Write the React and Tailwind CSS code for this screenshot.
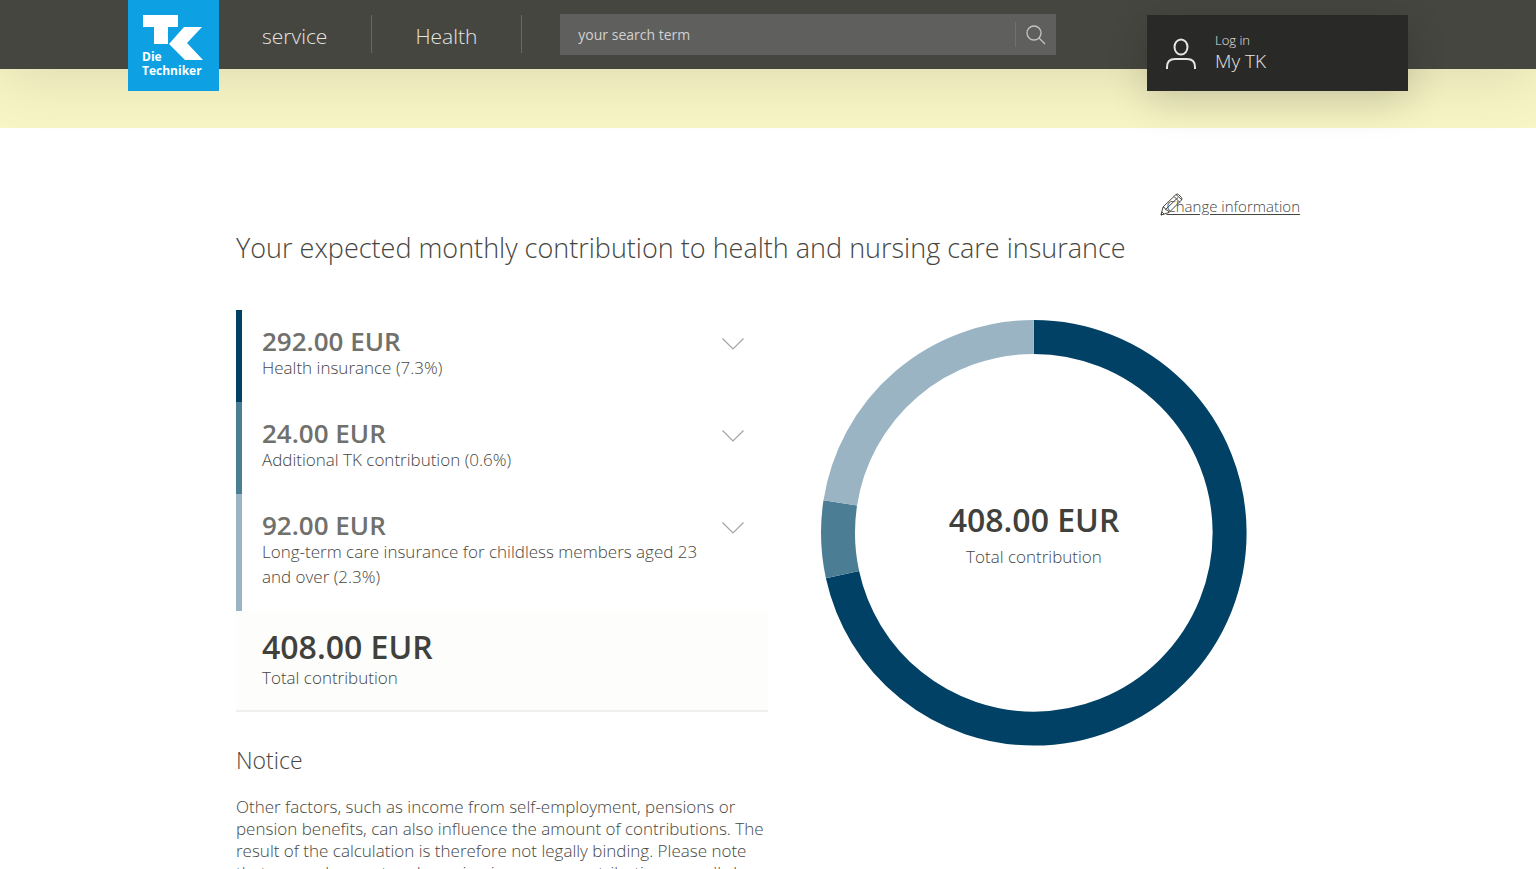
import { useState } from "react";

const contributions = [
  {
    id: "health",
    amount: 292,
    label: "Health insurance (7.3%)",
    border: "border-[#004165]",
    stroke: "#004165",
  },
  {
    id: "additional",
    amount: 24,
    label: "Additional TK contribution (0.6%)",
    border: "border-[#4b7d94]",
    stroke: "#4b7d94",
  },
  {
    id: "care",
    amount: 92,
    label: "Long-term care insurance for childless members aged 23 and over (2.3%)",
    border: "border-[#9ab4c3]",
    stroke: "#9ab4c3",
  },
];

const total = contributions.reduce((sum, item) => sum + item.amount, 0);

const formatAmount = (value) => `${value.toFixed(2)} EUR`;

const Logo = () => (
  <a
    href="#"
    className="flex h-[91px] w-[91px] shrink-0 flex-col bg-[#0da1e4] pl-[14px] pt-[14px] text-white"
  >
    <svg viewBox="0 0 62 47" className="h-[47px] w-[62px]" fill="currentColor" aria-hidden="true">
      <path d="M1 1h35v12H26v17H12V13H1z" />
      <path d="M42 13h18L45 29l16 17H43L27 30z" />
    </svg>
    <span className="-mt-[11px] text-xs font-bold leading-[14px]">
      Die
      <br />
      Techniker
    </span>
  </a>
);

const Header = () => (
  <header className="relative z-10 h-[69px] bg-[#464641] shadow-[0_10px_60px_rgba(0,0,0,0.1)]">
    <div className="mx-auto flex max-w-[1280px] items-start">
      <Logo />
      <nav className="mt-[15px] flex h-[38px] text-[21px] font-light text-[#e4e4e0]">
        <a href="#" className="flex items-center border-r border-[#686864] pl-[43px] pr-11 pt-[6px]">
          service
        </a>
        <a href="#" className="flex items-center border-r border-[#686864] pl-[43px] pr-11 pt-[6px]">
          Health
        </a>
      </nav>
      <form
        className="ml-[38px] mt-[14px] flex h-[41px] flex-1 items-center bg-[#5f5f5d]"
        onSubmit={(e) => e.preventDefault()}
      >
        <input
          type="search"
          aria-label="your search term"
          placeholder="your search term"
          className="h-full min-w-0 flex-1 bg-transparent px-[18px] text-sm text-white outline-none placeholder:text-[#d2d2d0]"
        />
        <button
          type="submit"
          aria-label="Search"
          className="flex h-[25px] w-[41px] items-center justify-center border-l border-[#70706e] text-[#c4c4c2]"
        >
          <svg viewBox="0 0 20 20" className="h-5 w-5" fill="none" stroke="currentColor" strokeWidth="1.3" aria-hidden="true">
            <circle cx="8" cy="8" r="7" />
            <path d="M13 13l6 6" />
          </svg>
        </button>
      </form>
      <a
        href="#"
        className="ml-[91px] mt-[15px] flex h-[76px] w-[261px] items-center bg-[#292927] pl-[18px] text-[#e4e4e0] shadow-[0_10px_40px_rgba(0,0,0,0.16)]"
      >
        <svg viewBox="0 0 32 32" className="h-8 w-8" fill="none" stroke="currentColor" strokeWidth="2" aria-hidden="true">
          <ellipse cx="16" cy="10" rx="6.5" ry="7.5" />
          <path d="M2 32v-2c0-5 3-8 8-8h12c5 0 8 3 8 8v2" />
        </svg>
        <span className="ml-[18px] pb-1 font-light">
          <span className="block text-[13px] leading-5">Log in</span>
          <span className="block text-[19px] leading-[22px]">My TK</span>
        </span>
      </a>
    </div>
  </header>
);

const ContributionRow = ({ item, open, onToggle }) => (
  <li className={`flex border-l-[6px] pb-[22px] pl-5 pr-6 pt-[18px] ${item.border}`}>
    <div className="flex-1 pr-3">
      <div className="text-[26px] font-semibold leading-[27px] text-[#70706c]">
        {formatAmount(item.amount)}
      </div>
      <div className="text-[17px] font-light leading-[25px]">{item.label}</div>
    </div>
    <button
      type="button"
      aria-label={`Details: ${item.label}`}
      aria-expanded={open}
      onClick={onToggle}
      className="flex h-8 w-[22px] items-center text-[#a3a3a0]"
    >
      <svg viewBox="0 0 22 12" className="h-3 w-[22px]" fill="none" stroke="currentColor" strokeWidth="1.2" aria-hidden="true">
        <path d="M0.5 0.5L11 11L21.5 0.5" />
      </svg>
    </button>
  </li>
);

const DonutChart = () => {
  let start = 0;
  const segments = contributions.map((item) => {
    const segment = { ...item, start };
    start += item.amount;
    return segment;
  });

  return (
    <div className="relative mx-auto mt-[10px] w-4/5 self-start">
      <svg viewBox="0 0 426 426" className="w-full" fill="none" aria-hidden="true">
        {segments.map((s) => (
          <circle
            key={s.id}
            cx="213"
            cy="213"
            r="196"
            pathLength={total}
            stroke={s.stroke}
            strokeWidth="34"
            strokeDasharray={`${s.amount} ${total - s.amount}`}
            strokeDashoffset={-s.start}
            transform="rotate(-90 213 213)"
          />
        ))}
      </svg>
      <div className="absolute inset-0 flex flex-col items-center justify-center pt-1 text-center">
        <div className="text-[32px] font-semibold leading-10 text-[#40403c]">{formatAmount(total)}</div>
        <div className="mt-1 text-[17px] font-light leading-[25px]">Total contribution</div>
      </div>
    </div>
  );
};

const App = () => {
  const [openId, setOpenId] = useState(null);

  return (
    <div className="bg-white font-['Open_Sans','Noto_Sans',sans-serif] text-[#464641]">
      <Header />
      <div className="h-[59px] bg-[#f7f4c5]" />

      <main className="mx-auto max-w-[1280px] px-[108px] pt-[66px]">
        <div className="flex justify-end">
          <a href="#" className="relative text-[15px] font-light leading-6 underline underline-offset-2">
            <svg
              viewBox="0 0 24 24"
              className="absolute -left-[6px] -top-px h-6 w-6"
              fill="none"
              stroke="currentColor"
              strokeWidth="1"
              aria-hidden="true"
            >
              <path d="M1 22l2-8L16 1.5q1-1 2.5 0l3 3q1 1.5 0 2.5L9 19.5z" />
              <path d="M3 14q2 0 2.5 2.5Q8.5 17 9 19.5M5.5 16.5L18 4.5M14 3.5l6 6M16 1.5l6 5.5M1 22l3-1-2-2z" />
            </svg>
            Change information
          </a>
        </div>

        <h1 className="mt-3 text-[27px] font-light leading-9">
          Your expected monthly contribution to health and nursing care insurance
        </h1>

        <div className="mt-11 grid grid-cols-2">
          <section>
            <ul>
              {contributions.map((item) => (
                <ContributionRow
                  key={item.id}
                  item={item}
                  open={openId === item.id}
                  onToggle={() => setOpenId(openId === item.id ? null : item.id)}
                />
              ))}
            </ul>
            <div className="border-b-2 border-[#efefec] bg-[#fdfdfb] px-[26px] pb-5 pt-[18px]">
              <div className="text-[32px] font-semibold leading-9 text-[#40403c]">{formatAmount(total)}</div>
              <div className="text-[17px] font-light leading-[25px]">Total contribution</div>
            </div>

            <h2 className="mt-8 text-[23px] font-light leading-8">Notice</h2>
            <p className="mt-5 text-[17px] font-light leading-[22px]">
              Other factors, such as income from self-employment, pensions or pension benefits, can also
              influence the amount of contributions. The result of the calculation is therefore not legally
              binding. Please note that unemployment and pension insurance contributions usually be
            </p>
          </section>

          <DonutChart />
        </div>
      </main>
    </div>
  );
};

export default App;
